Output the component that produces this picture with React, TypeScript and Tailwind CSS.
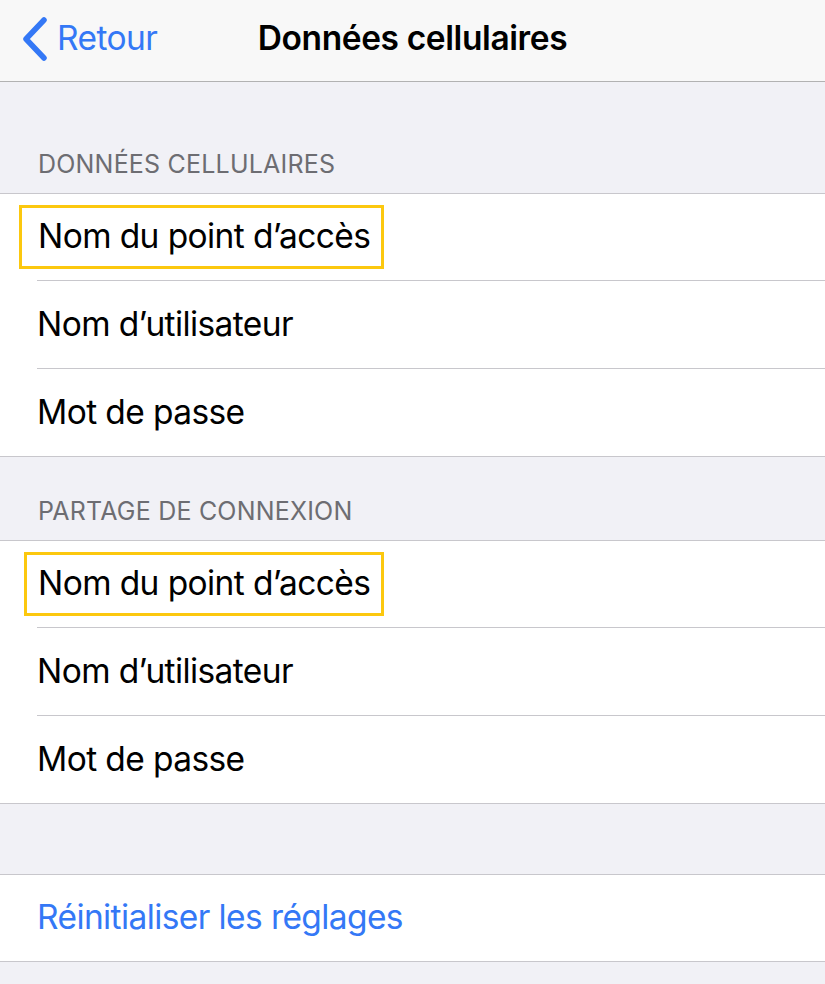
const font = { fontFamily: "Inter, 'Liberation Sans', sans-serif" };

function Row({
  label,
  highlight,
  last,
  blue,
  h = "h-[87px]",
}: {
  label: string;
  highlight?: string;
  last?: boolean;
  blue?: boolean;
  h?: string;
}) {
  return (
    <div className="pl-[37px] bg-white">
      <div
        className={`${h} flex items-center ${last ? "" : "border-b border-[#c8c7cc]"}`}
      >
        <span
          className={`text-[33.5px] tracking-[-0.6px] leading-none ${blue ? "text-[#3478f6]" : "text-black"} ${
            highlight ? `${highlight} pr-[11px] py-[12px] border-[3px] border-[#fcc80e]` : ""
          }`}
        >
          {label}
        </span>
      </div>
    </div>
  );
}

function Section({
  title,
  rows,
  box,
}: {
  title: string;
  rows: string[];
  box: string;
}) {
  return (
    <>
      <div className="h-[83px] flex items-end pl-[38px] pb-[16px]">
        <span className="text-[25px] tracking-[0.2px] text-[#6d6d72] leading-none">
          {title}
        </span>
      </div>
      <div className="border-y border-[#c8c7cc]">
        {rows.map((r, i) => (
          <Row
            key={i}
            label={r}
            highlight={i === 0 ? box : undefined}
            last={i === rows.length - 1}
            h={i === 1 ? "h-[88px]" : "h-[87px]"}
          />
        ))}
      </div>
    </>
  );
}

export default function App() {
  return (
    <div className="w-[825px] h-[984px] bg-[#f1f1f6] overflow-hidden" style={font}>
      {/* nav bar */}
      <div className="h-[82px] bg-[#f8f8f8] border-b border-[#b2b2b2] grid grid-cols-[1fr_auto_1fr] items-center">
        <div className="flex items-center pl-[22px] text-[#3478f6]">
          <svg width="26" height="44" viewBox="0 0 26 44" className="mr-[9px] -mt-[3px]">
            <path
              d="M22 3 L4 22 L22 41"
              fill="none"
              stroke="#3478f6"
              strokeWidth="5.5"
              strokeLinecap="round"
              strokeLinejoin="round"
            />
          </svg>
          <span className="text-[33.5px] tracking-[-0.6px] leading-none -mt-[3px]">Retour</span>
        </div>
        <span className="text-[33.5px] font-semibold tracking-[-0.4px] text-black leading-none -mt-[3px]">
          Données cellulaires
        </span>
        <div />
      </div>

      <div className="h-[28px]" />
      <Section
        title="DONNÉES CELLULAIRES"
        rows={["Nom du point d’accès", "Nom d’utilisateur", "Mot de passe"]}
        box="-ml-[18px] pl-[16px]"
      />
      <Section
        title="PARTAGE DE CONNEXION"
        rows={["Nom du point d’accès", "Nom d’utilisateur", "Mot de passe"]}
        box="-ml-[13px] pl-[11px]"
      />

      <div className="h-[70px]" />
      <div className="border-y border-[#c8c7cc]">
        <Row label="Réinitialiser les réglages" last blue h="h-[86px]" />
      </div>
    </div>
  );
}
